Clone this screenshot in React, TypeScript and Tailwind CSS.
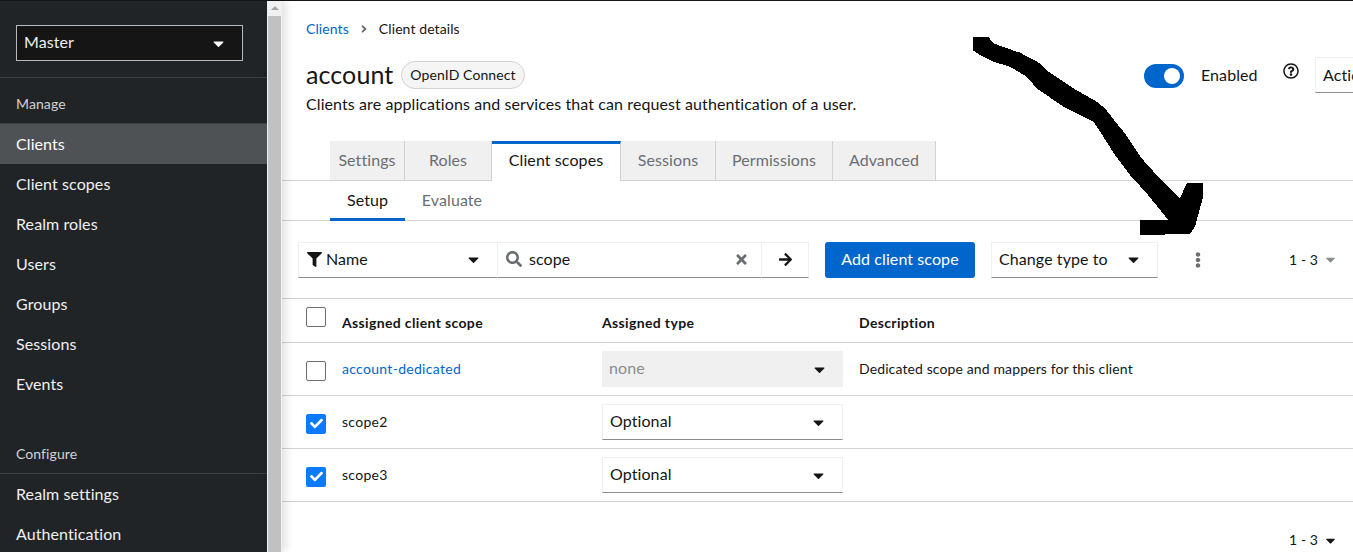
import {
  FaAngleRight,
  FaArrowRight,
  FaCaretDown,
  FaCheck,
  FaEllipsisV,
  FaFilter,
  FaRegQuestionCircle,
  FaSearch,
  FaTimes,
} from "react-icons/fa";

const manageItems = ["Clients", "Client scopes", "Realm roles", "Users", "Groups", "Sessions", "Events"];
const configureItems = ["Realm settings", "Authentication"];
const tabs = [
  { label: "Settings", width: "w-[75px]" },
  { label: "Roles", width: "w-[87px]" },
  { label: "Client scopes", width: "w-[129px]" },
  { label: "Sessions", width: "w-[95px]" },
  { label: "Permissions", width: "w-[117px]" },
  { label: "Advanced", width: "w-[103px]" },
];

function Sidebar() {
  return (
    <aside className="w-[267px] shrink-0 h-full overflow-hidden bg-[#212427] text-[#f0f0f0]">
      <div className="px-4 pt-[25px] pb-4 border-b border-[#3c3f42]">
        <div className="h-[36px] w-[227px] flex items-center justify-between pl-[7px] pr-[15px] bg-[#151515] border border-[#b8bbbe]">
          <span className="pb-[2px]">Master</span>
          <FaCaretDown className="text-white text-[17px]" />
        </div>
      </div>
      <div className="h-[46px] pl-4 pt-[16px] text-sm leading-[20px] text-[#d2d2d2] border-b border-[#3c3f42]">Manage</div>
      {manageItems.map((item) => (
        <div key={item} className={`h-[40px] pl-4 pb-[1px] flex items-center ${item === "Clients" ? "bg-[#4f5255] text-white" : ""}`}>
          {item}
        </div>
      ))}
      <div className="h-[46px] mt-[24px] pl-4 pt-[16px] text-sm leading-[20px] text-[#d2d2d2] border-b border-[#3c3f42]">Configure</div>
      {configureItems.map((item) => (
        <div key={item} className="h-[40px] pl-4 pb-[1px] flex items-center">
          {item}
        </div>
      ))}
    </aside>
  );
}

function Scrollbar() {
  return (
    <div className="relative z-10 w-[15px] shrink-0 h-full bg-[#f1f1f1] flex flex-col items-center shadow-[4px_0_8px_rgba(3,3,3,0.12)]">
      <div className="h-[16px] w-full flex items-center justify-center">
        <div className="w-0 h-0 border-x-[4px] border-x-transparent border-b-[4px] border-b-[#a3a3a3]" />
      </div>
      <div className="w-[13px] flex-1 bg-[#c1c1c1]" />
    </div>
  );
}

function ClientTabs() {
  return (
    <div className="h-[40px] pl-[48px] flex border-b border-[#d2d2d2]">
      {tabs.map((tab) =>
        tab.label === "Client scopes" ? (
          <div
            key={tab.label}
            className={`${tab.width} h-[40px] pb-[5px] flex items-center justify-center bg-white text-[#151515] border-t-[3px] border-[#06c] border-r border-r-[#d2d2d2]`}
          >
            {tab.label}
          </div>
        ) : (
          <div
            key={tab.label}
            className={`${tab.width} h-[39px] pb-[2px] flex items-center justify-center bg-[#f0f0f0] text-[#6a6e73] border-r border-[#d2d2d2]`}
          >
            {tab.label}
          </div>
        ),
      )}
    </div>
  );
}

function TypeSelect({ value, disabled }: { value: string; disabled?: boolean }) {
  return (
    <div
      className={`w-[241px] h-[36px] pl-[7px] pr-[15px] flex items-center justify-between ${
        disabled
          ? "bg-[#f0f0f0] text-[#8a8d90]"
          : "border border-[#f0f0f0] border-b-[#8a8d90] text-[#151515]"
      }`}
    >
      <span className="pb-[2px]">{value}</span>
      <FaCaretDown className="text-[#151515] text-[17px]" />
    </div>
  );
}

function Checkbox({ checked }: { checked?: boolean }) {
  if (checked) {
    return (
      <div className="w-[20px] h-[20px] rounded-[2px] bg-[#0a7bff] flex items-center justify-center">
        <FaCheck className="text-white text-[13px]" />
      </div>
    );
  }
  return <div className="w-[20px] h-[20px] rounded-[2px] border border-[#6a6e73] bg-white" />;
}

function Row({ name, type, link, checked, description, disabled }: { name: string; type: string; link?: boolean; checked?: boolean; description?: string; disabled?: boolean }) {
  return (
    <div className="grid grid-cols-[36px_260px_257px_1fr] items-center h-[53px] pl-[24px] border-b border-[#d2d2d2] text-sm">
      <div className="mt-[3px]">
        <Checkbox checked={checked} />
      </div>
      <span className={`tracking-[0.3px] ${link ? "text-[#06c]" : "text-[#151515]"}`}>{name}</span>
      <div className="text-base">
        <TypeSelect value={type} disabled={disabled} />
      </div>
      <span className="tracking-[0.12px] text-[#151515]">{description}</span>
    </div>
  );
}

function Toolbar() {
  return (
    <div className="h-[78px] pl-[16px] flex items-center border-b border-[#d2d2d2]">
      <div className="w-[200px] h-[36px] pl-2 pr-[15px] flex items-center justify-between border border-[#f0f0f0] border-b-[#8a8d90]">
        <span className="flex items-center gap-[4px] pb-[1px]">
          <FaFilter className="text-[#151515] text-[15px]" />
          Name
        </span>
        <FaCaretDown className="text-[#151515] text-[17px]" />
      </div>
      <div className="w-[263px] h-[36px] pl-2 pr-[12px] flex items-center justify-between border-t border-[#f0f0f0] border-b border-b-[#8a8d90]">
        <span className="flex items-center gap-[7px] pb-[1px]">
          <FaSearch className="text-[#6a6e73] text-[16px]" />
          scope
        </span>
        <FaTimes className="text-[#6a6e73] text-[15px]" />
      </div>
      <div className="w-[48px] h-[36px] flex items-center justify-center border border-[#f0f0f0] border-b-[#8a8d90]">
        <FaArrowRight className="text-[#151515] text-[15px]" />
      </div>
      <button className="ml-[16px] w-[150px] h-[36px] pb-[1px] rounded-[3px] bg-[#06c] text-white">Add client scope</button>
      <div className="ml-[16px] w-[167px] h-[36px] pl-[7px] pr-[15px] flex items-center justify-between border border-[#f0f0f0] border-b-[#8a8d90]">
        <span className="pb-[1px]">Change type to</span>
        <FaCaretDown className="text-[#151515] text-[17px]" />
      </div>
      <FaEllipsisV className="ml-[32px] text-[#6a6e73] text-[16px]" />
      <span className="ml-[83px] text-sm text-[#151515]">1 - 3</span>
      <FaCaretDown className="ml-[5px] text-[#8a8d90] text-[15px]" />
    </div>
  );
}

export default function App() {
  return (
    <div className="relative w-[1353px] h-[552px] overflow-hidden bg-white flex font-['Lato',sans-serif] tracking-[0.09px] text-base text-[#151515]">
      <div className="absolute inset-x-0 top-0 h-px bg-[#151515] z-20" />
      <Sidebar />
      <Scrollbar />
      <main className="flex-1 min-w-0 h-full">
        <div className="pl-[24px] pt-[19px] h-[59px] flex items-start text-sm leading-[20px]">
          <span className="text-[#06c]">Clients</span>
          <FaAngleRight className="mx-[9px] mt-[4px] text-[#6a6e73] text-[12px]" />
          <span>Client details</span>
        </div>
        <div className="pl-[24px] h-[32px] flex items-center">
          <h1 className="text-[25px] leading-[30px] pb-[3px]">account</h1>
          <span className="ml-[8px] h-[28px] px-[8px] flex items-center rounded-full border border-[#d2d2d2] bg-[#f5f5f5] text-sm">OpenID Connect</span>
          <div className="ml-auto -mr-[62px] flex items-center shrink-0">
            <div className="relative mt-[2px] w-[40px] h-[24px] rounded-full bg-[#06c]">
              <div className="absolute right-[4px] top-[4px] w-[16px] h-[16px] rounded-full bg-white" />
            </div>
            <span className="ml-[17px] w-[58px] text-[#151515]">Enabled</span>
            <FaRegQuestionCircle className="ml-[24px] -mt-[8px] text-[16px]" />
            <div className="ml-[16px] w-[100px] h-[36px] pl-[7px] flex items-center border border-[#f0f0f0] border-b-[#8a8d90]">Action</div>
          </div>
        </div>
        <p className="pl-[24px] pt-[1px] h-[50px] leading-[24px]">Clients are applications and services that can request authentication of a user.</p>
        <ClientTabs />
        <div className="h-[40px] pl-[48px] flex border-b border-[#d2d2d2]">
          <div className="w-[75px] h-[40px] flex items-center justify-center text-[#151515] border-b-[3px] border-[#06c]">Setup</div>
          <div className="w-[94px] h-[40px] pb-[3px] flex items-center justify-center text-[#6a6e73]">Evaluate</div>
        </div>
        <Toolbar />
        <div className="grid grid-cols-[36px_260px_257px_1fr] items-center h-[44px] pl-[24px] border-b border-[#d2d2d2] text-sm font-bold tracking-[0.35px]">
          <div className="-mt-[7px]">
            <Checkbox />
          </div>
          <span className="pt-[4px]">Assigned client scope</span>
          <span className="pt-[4px]">Assigned type</span>
          <span className="pt-[4px]">Description</span>
        </div>
        <Row name="account-dedicated" type="none" link disabled description="Dedicated scope and mappers for this client" />
        <Row name="scope2" type="Optional" checked />
        <Row name="scope3" type="Optional" checked />
        <div className="h-[50px] pl-[1007px] pt-[28px] flex items-start">
          <span className="text-sm leading-[20px]">1 - 3</span>
          <FaCaretDown className="ml-[5px] mt-[3px] text-[#151515] text-[15px]" />
        </div>
      </main>
      {/* marker arrow drawn over the screenshot */}
      <svg className="absolute left-[960px] top-[30px]" width="260" height="210" viewBox="0 0 780 630" shapeRendering="crispEdges">
        <path
          d="M40 20 L85 20 L100 40 L150 58 L180 68 L240 100 L265 125 L340 175 L410 215 L435 235 L470 280 L495 310 L545 385 L590 435 L625 470 L660 505 L680 460 L730 460 L728 505 L705 590 L690 612 L540 615 L540 570 L625 570 L560 490 L510 435 L465 375 L430 320 L400 275 L310 230 L230 175 L200 140 L150 110 L100 95 L60 75 L40 62 Z"
          fill="#000"
        />
      </svg>
    </div>
  );
}
